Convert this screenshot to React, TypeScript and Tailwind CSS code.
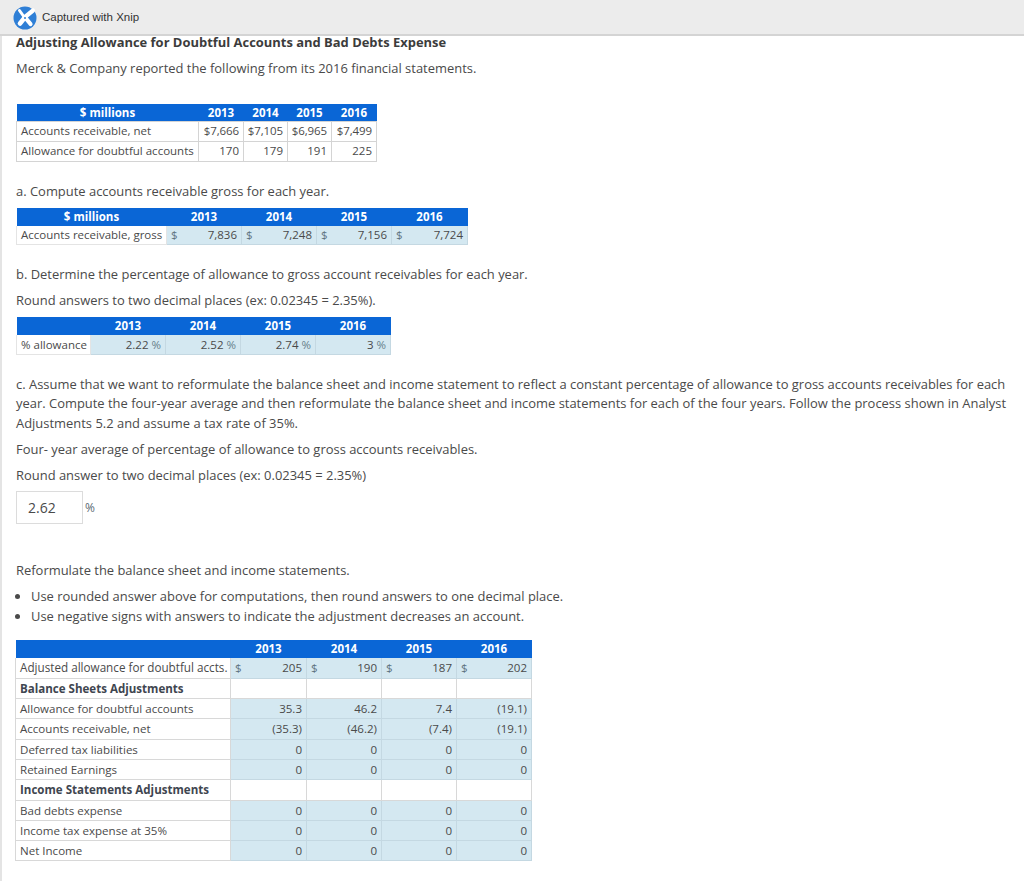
import React from "react";

const years = ["2013", "2014", "2015", "2016"];

const XnipLogo = () => (
  <svg width="24" height="24" viewBox="0 0 24 24" className="shrink-0">
    <circle cx="12" cy="12" r="11.5" fill="#2f7fd6" />
    <path d="M12 11 L20 4.5" stroke="#fff" strokeWidth="4.2" strokeLinecap="round" />
    <path d="M11.5 11.5 L6.5 4.5" stroke="#fff" strokeWidth="3" strokeLinecap="round" />
    <path d="M11 12.5 L7 17.5" stroke="#fff" strokeWidth="4.6" strokeLinecap="round" />
    <path d="M13 12.5 L17.5 18" stroke="#fff" strokeWidth="4.2" strokeLinecap="round" />
    <circle cx="12" cy="12" r="1" fill="#2f7fd6" />
  </svg>
);

const Money = ({ value }: { value: string }) => (
  <div className="flex justify-between">
    <span className="text-[#5f7380]">$</span>
    <span>{value}</span>
  </div>
);

const HeaderCell = ({ children }: { children?: React.ReactNode }) => (
  <th className="bg-[#0a66d6] text-white font-bold text-center p-0 leading-none">{children}</th>
);

const rows4: { label: string; values?: string[]; bold?: boolean }[] = [
  { label: "Balance Sheets Adjustments", bold: true },
  { label: "Allowance for doubtful accounts", values: ["35.3", "46.2", "7.4", "(19.1)"] },
  { label: "Accounts receivable, net", values: ["(35.3)", "(46.2)", "(7.4)", "(19.1)"] },
  { label: "Deferred tax liabilities", values: ["0", "0", "0", "0"] },
  { label: "Retained Earnings", values: ["0", "0", "0", "0"] },
  { label: "Income Statements Adjustments", bold: true },
  { label: "Bad debts expense", values: ["0", "0", "0", "0"] },
  { label: "Income tax expense at 35%", values: ["0", "0", "0", "0"] },
  { label: "Net Income", values: ["0", "0", "0", "0"] },
];

export default function App() {
  return (
    <div className="w-[1024px] h-[881px] overflow-hidden bg-white font-['Open_Sans',sans-serif] text-[12.95px] text-[#4a4a4a]">
      <header className="h-[36px] pt-[2px] bg-[#ececec] border-b-2 border-[#d4d4d4] flex items-center pl-[13px] gap-[5px] font-['Liberation_Sans',sans-serif] text-[11.5px] text-[#333]">
        <XnipLogo />
        <span>Captured with Xnip</span>
      </header>

      <main className="h-[845px] border-l-2 border-[#e4e4e4] pl-[14px]">
        <h1 className="font-bold text-[#3c3c3c] leading-[13px]">Adjusting Allowance for Doubtful Accounts and Bad Debts Expense</h1>
        <p className="mt-[13px] leading-[13px]">Merck &amp; Company reported the following from its 2016 financial statements.</p>

        <table className="mt-[29px] table-fixed border-collapse text-[11.5px] w-[360px]">
          <colgroup>
            <col className="w-[182px]" />
            <col className="w-[45px]" />
            <col className="w-[44px]" />
            <col className="w-[44px]" />
            <col className="w-[45px]" />
          </colgroup>
          <thead>
            <tr className="h-[17px]">
              <HeaderCell>$ millions</HeaderCell>
              {years.map((y) => <HeaderCell key={y}>{y}</HeaderCell>)}
            </tr>
          </thead>
          <tbody>
            <tr className="h-[20px]">
              <td className="border border-[#d4d4d4] px-[4px] whitespace-nowrap">Accounts receivable, net</td>
              {["$7,666", "$7,105", "$6,965", "$7,499"].map((v) => (
                <td key={v} className="border border-[#d4d4d4] text-right pr-[4px] pl-0 tracking-[-0.1px]">{v}</td>
              ))}
            </tr>
            <tr className="h-[20px]">
              <td className="border border-[#d4d4d4] px-[4px] whitespace-nowrap">Allowance for doubtful accounts</td>
              {["170", "179", "191", "225"].map((v) => (
                <td key={v} className="border border-[#d4d4d4] text-right pr-[4px]">{v}</td>
              ))}
            </tr>
          </tbody>
        </table>

        <p className="mt-[23px] leading-[13px]">a. Compute accounts receivable gross for each year.</p>

        <table className="mt-[10px] table-fixed border-collapse text-[11.5px] w-[451px]">
          <colgroup>
            <col className="w-[150px]" />
            <col className="w-[75px]" />
            <col className="w-[75px]" />
            <col className="w-[75px]" />
            <col className="w-[76px]" />
          </colgroup>
          <thead>
            <tr className="h-[18px]">
              <HeaderCell>$ millions</HeaderCell>
              {years.map((y) => <HeaderCell key={y}>{y}</HeaderCell>)}
            </tr>
          </thead>
          <tbody>
            <tr className="h-[19px]">
              <td className="border border-[#e4e4e4] border-t-0 px-[4px] whitespace-nowrap">Accounts receivable, gross</td>
              {["7,836", "7,248", "7,156", "7,724"].map((v) => (
                <td key={v} className="bg-[#d4e8f1] border-x border-[#c4d8e2] border-b px-[4px]"><Money value={v} /></td>
              ))}
            </tr>
          </tbody>
        </table>

        <p className="mt-[23px] leading-[13px]">b. Determine the percentage of allowance to gross account receivables for each year.</p>
        <p className="mt-[13px] leading-[13px]">Round answers to two decimal places (ex: 0.02345 = 2.35%).</p>

        <table className="mt-[10px] table-fixed border-collapse text-[11.5px] w-[374px]">
          <colgroup>
            <col className="w-[74px]" />
            <col className="w-[75px]" />
            <col className="w-[75px]" />
            <col className="w-[75px]" />
            <col className="w-[75px]" />
          </colgroup>
          <thead>
            <tr className="h-[18px]">
              <HeaderCell />
              {years.map((y) => <HeaderCell key={y}>{y}</HeaderCell>)}
            </tr>
          </thead>
          <tbody>
            <tr className="h-[19px]">
              <td className="border border-[#e4e4e4] border-t-0 px-[4px] whitespace-nowrap">% allowance</td>
              {["2.22", "2.52", "2.74", "3"].map((v) => (
                <td key={v} className="bg-[#d4e8f1] border-x border-b border-[#c4d8e2] text-right pr-[4px]">
                  {v} <span className="text-[#66808c]">%</span>
                </td>
              ))}
            </tr>
          </tbody>
        </table>

        <p className="mt-[20px] leading-[19.5px] w-[996px]">
          c. Assume that we want to reformulate the balance sheet and income statement to reflect a constant percentage of allowance to gross accounts receivables for each year. Compute the four-year average and then reformulate the balance sheet and income statements for each of the four years. Follow the process shown in Analyst Adjustments 5.2 and assume a tax rate of 35%.
        </p>
        <p className="mt-[10px] leading-[13px]">Four- year average of percentage of allowance to gross accounts receivables.</p>
        <p className="mt-[13px] leading-[13px]">Round answer to two decimal places (ex: 0.02345 = 2.35%)</p>

        <div className="mt-[9px] flex items-center gap-[2px]">
          <div className="w-[67px] h-[33px] border border-[#dcdcdc] flex items-center pl-[11px] text-[14px]">2.62</div>
          <span className="text-[12px] text-[#5a6a72]">%</span>
        </div>

        <p className="mt-[40px] leading-[13px]">Reformulate the balance sheet and income statements.</p>
        <ul className="mt-[9px] list-disc pl-[15px] leading-[20px]">
          <li>Use rounded answer above for computations, then round answers to one decimal place.</li>
          <li>Use negative signs with answers to indicate the adjustment decreases an account.</li>
        </ul>

        <table className="mt-[14px] -ml-px table-fixed border-collapse text-[11.55px] w-[516px]">
          <colgroup>
            <col className="w-[215px]" />
            <col className="w-[76px]" />
            <col className="w-[75px]" />
            <col className="w-[75px]" />
            <col className="w-[75px]" />
          </colgroup>
          <thead>
            <tr className="h-[18px]">
              <HeaderCell />
              {years.map((y) => <HeaderCell key={y}>{y}</HeaderCell>)}
            </tr>
          </thead>
          <tbody>
            <tr className="h-[20.3px]">
              <td className="border border-[#d8d8d8] border-t-0 px-[4px] whitespace-nowrap text-[11.7px]">Adjusted allowance for doubtful accts.</td>
              {["205", "190", "187", "202"].map((v) => (
                <td key={v} className="bg-[#d4e8f1] border-x border-b border-[#c4d8e2] px-[4px]"><Money value={v} /></td>
              ))}
            </tr>
            {rows4.map((row) => (
              <tr key={row.label} className="h-[20.3px]">
                <td className={`border border-[#d8d8d8] px-[4px] whitespace-nowrap ${row.bold ? "font-bold text-[#3f4650]" : ""}`}>{row.label}</td>
                {row.values
                  ? row.values.map((v, i) => (
                      <td key={i} className="bg-[#d4e8f1] border border-[#c4d8e2] text-right pr-[4px]">{v}</td>
                    ))
                  : years.map((y) => <td key={y} className="border border-[#d8d8d8]" />)}
              </tr>
            ))}
          </tbody>
        </table>
      </main>
    </div>
  );
}
